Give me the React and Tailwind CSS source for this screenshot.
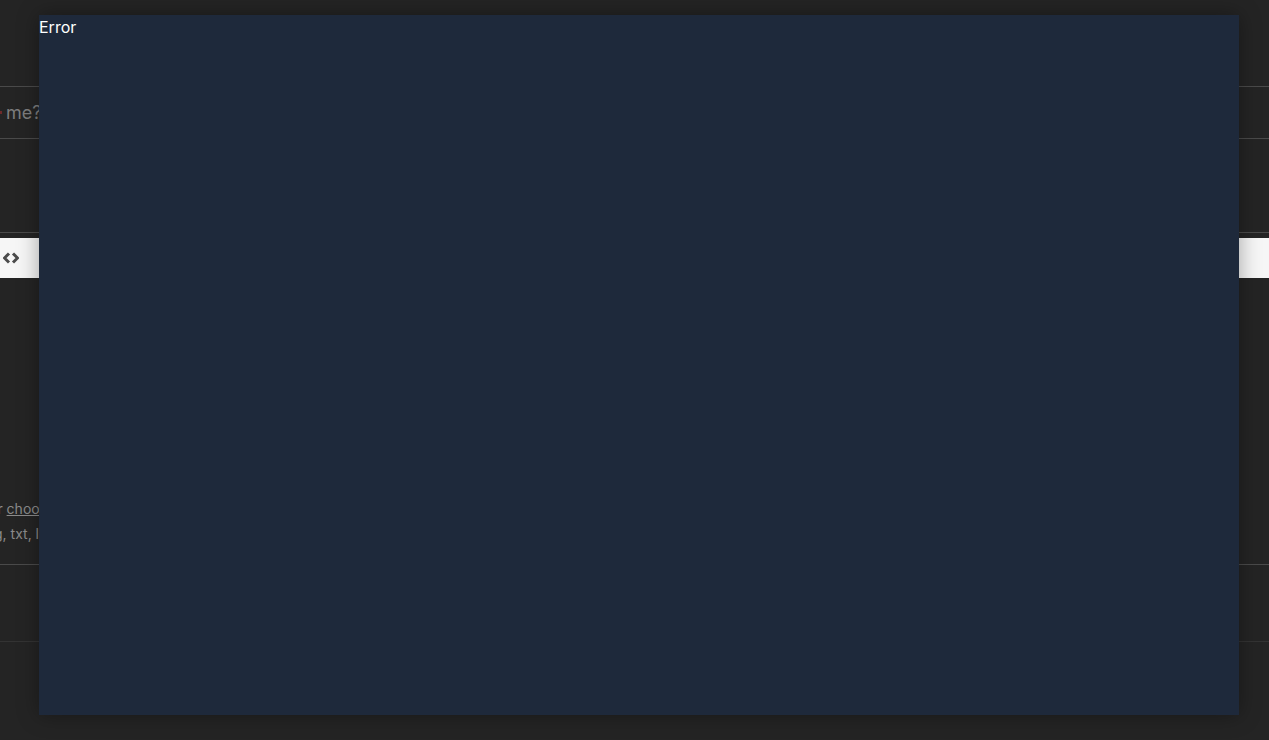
const App = () => {
  return (
    <div className="relative h-[740px] w-full overflow-hidden bg-[#242424] font-['Inter',sans-serif]">
      {/* page behind the modal */}
      <div className="flex h-full flex-col">
        <div className="h-[87px] shrink-0 border-b border-[#4a4a4a]" />
        <div className="flex h-[52px] shrink-0 items-center border-b border-[#4a4a4a] text-lg text-[#7d7d7d]">
          <span className="h-[3px] w-[2px] bg-[#6e2a2a]" />
          <span className="ml-1">me?</span>
        </div>
        <div className="h-[94px] shrink-0 border-b border-[#4a4a4a]" />
        <div className="mt-[5px] flex h-10 shrink-0 items-center bg-[#f6f6f6] pl-[3px] text-[#4b4b4b]">
          <svg width="16" height="12" viewBox="0 0 16 12" fill="none" stroke="currentColor" strokeWidth="3">
            <path d="M6 1.5 1.5 6 6 10.5" />
            <path d="M10 1.5 14.5 6 10 10.5" />
          </svg>
        </div>
        <div className="flex h-[287px] shrink-0 flex-col border-b border-[#4a4a4a] pt-[221px] text-sm whitespace-nowrap text-[#8a8a8a]">
          <p className="-ml-[11px] leading-5">
            or <span className="underline">choose a file</span>
          </p>
          <p className="mt-[5px] -ml-[6px] leading-5">g, txt, log</p>
        </div>
        <div className="h-[77px] shrink-0 border-b border-[#333333]" />
      </div>

      {/* error modal */}
      <div className="absolute top-[15px] left-[39px] h-[700px] w-[1200px] bg-[#1e293b] shadow-[0_0_20px_rgba(0,0,0,0.35)]">
        <p className="mt-[2px] text-base leading-5 text-white">Error</p>
      </div>
    </div>
  );
};

export default App;
